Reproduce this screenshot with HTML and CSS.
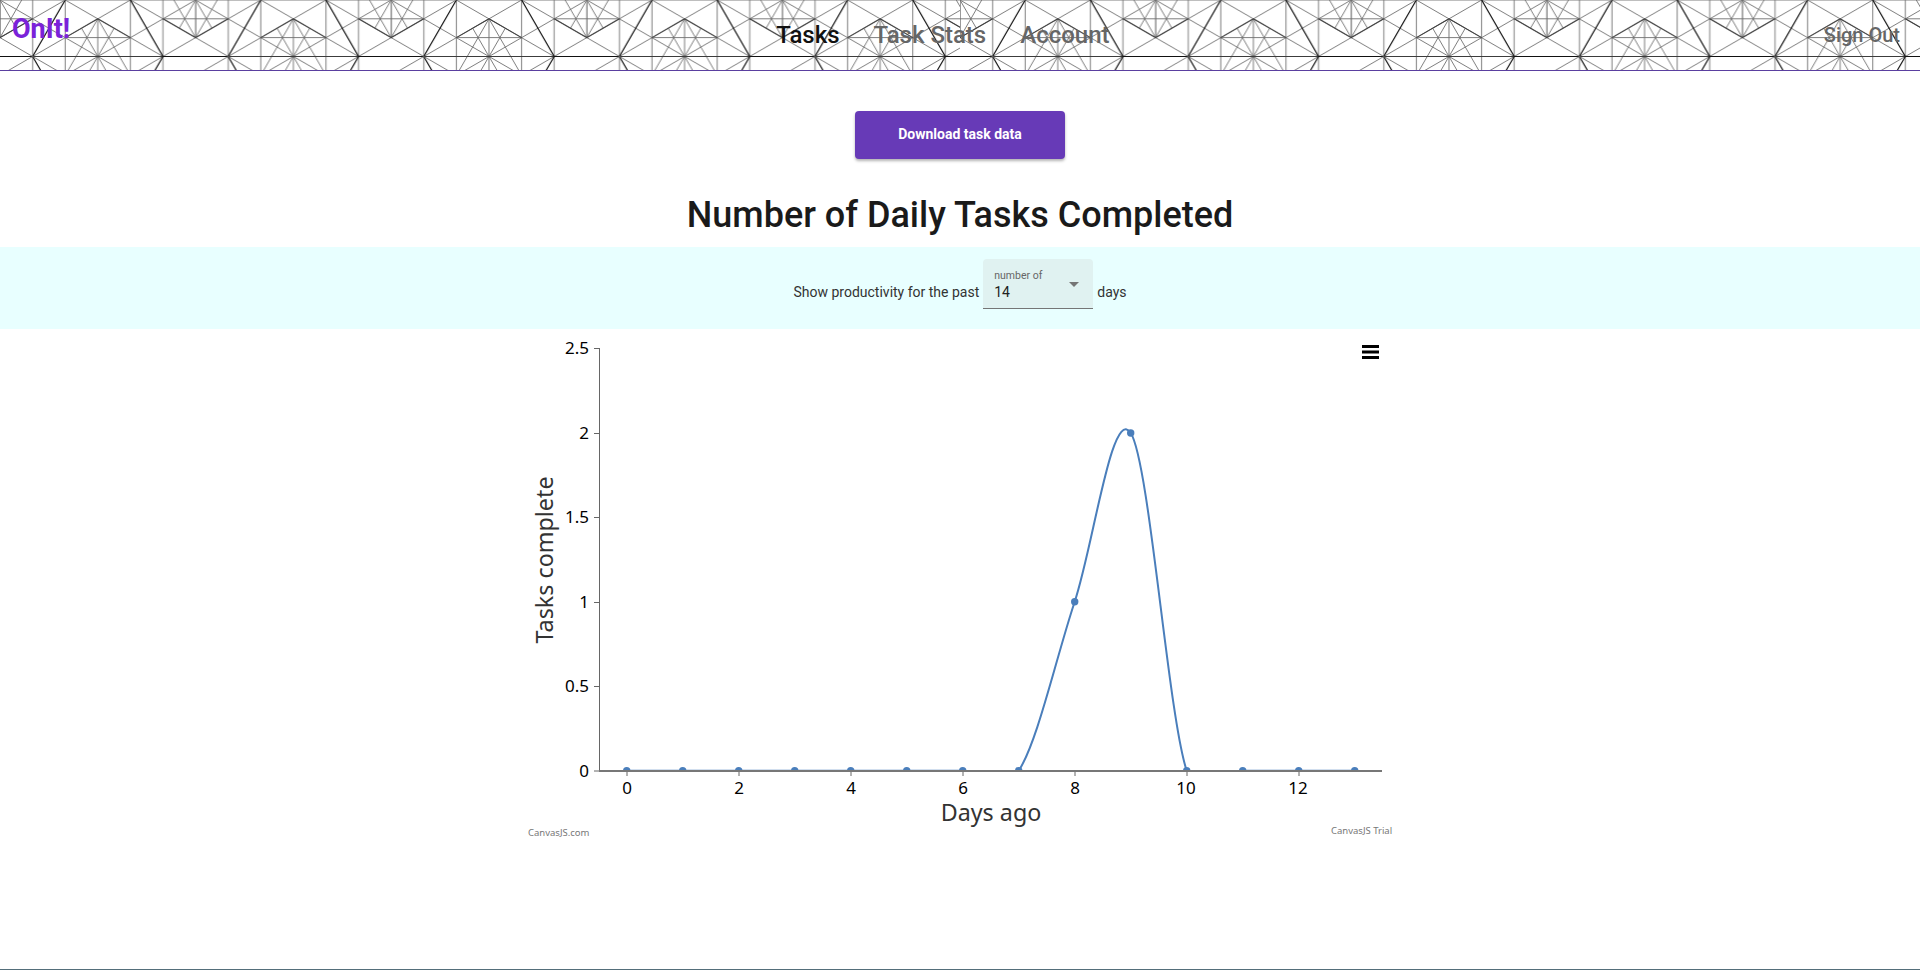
FILE: index.html
```html
<!DOCTYPE html>
<html lang="en">
<head>
    <meta charset="UTF-8">
    <title>OnIt! - Task Stats</title>
    <link rel="stylesheet" href="styles.css">
</head>
<body>

    <header class="nav">
        <div class="nav-bg">
            <svg class="nav-tile" width="960" height="70">
                <defs>
                    <g id="tile-lines">
                        <path class="ln-light" d="M163 0V76M32.6 0V76"/>
                        <path class="ln" d="M0 0H195.6M65.2 0V76M130.4 0V76M97.8 18.8V76M0 0V37.6M195.6 0V37.6M65.2 37.6H130.4M163 18.8H228.2"/>
                        <path class="ln" d="M32.6 56.5L130.4 0M65.2 0L163 56.5M81.5 28.2L97.8 56.5M114.100 28.2L97.8 56.5M195.6 0L97.8 56.5M0 0L97.8 56.5M97.8 56.5L65.2 75.3M97.8 56.5L130.4 75.3M97.8 56.5L86.9 75.3M97.8 56.5L108.7 75.3M97.8 18.8L65.2 75.3M97.8 18.8L130.4 75.3"/>
                        <path class="ln" d="M195.6 0L179.3 28.2M195.6 0L211.9 28.2M195.6 37.6L173.9 0M195.6 37.6L217.3 0M130.4 0L260.8 75.3M260.8 0L130.4 75.3M32.6 56.5L0 75.3"/>
                        <path class="ln-mid" d="M0 56.5H195.6M97.8 18.8L65.2 37.6M97.8 18.8L130.4 37.6M163 18.8L195.6 37.6L228.2 18.8"/>
                        <path class="ln-dark" d="M65.2 0L32.6 56.5L43.5 75.3M130.4 0L163 56.5L152.1 75.3M163 56.5H195.6M0 56.5H32.6"/>
                    </g>
                    <pattern id="tile" patternUnits="userSpaceOnUse" width="195.6" height="76">
                        <use href="#tile-lines"/>
                        <use href="#tile-lines" x="-195.6"/>
                    </pattern>
                </defs>
                <rect width="960" height="70" fill="url(#tile)"/>
            </svg>
            <svg class="nav-tile" width="960" height="70">
                <rect width="960" height="70" fill="url(#tile)"/>
            </svg>
        </div>
        <a class="brand" href="#">OnIt!</a>
        <nav class="nav-links">
            <a class="active" href="#">Tasks</a>
            <a href="#">Task Stats</a>
            <a href="#">Account</a>
        </nav>
        <a class="sign-out" href="#">Sign Out</a>
    </header>

    <main class="stats">
        <button class="download-btn">Download task data</button>
        <h1>Number of Daily Tasks Completed</h1>

        <div class="range-bar">
            <span class="range-text">Show productivity for the past</span>
            <div class="range-select">
                <span class="range-label">number of</span>
                <span class="range-value">14</span>
                <svg class="range-arrow" width="10" height="5" viewBox="0 0 10 5"><path d="M0 0H10L5 5Z"/></svg>
            </div>
            <span class="range-text">days</span>
        </div>

        <svg class="chart" width="880" height="530" viewBox="520 329 880 530">
            <defs>
                <clipPath id="plot"><rect x="600" y="340" width="782" height="431"/></clipPath>
            </defs>

            <!-- data -->
            <g clip-path="url(#plot)">
                <path class="series" d="M626.7 770.7H962.7C981 770.7 1000 799 1018.7 770.7C1037.4 742.5 1056 657.9 1074.7 601.7C1093.4 545.5 1112 404.8 1130.7 433C1149.4 461.2 1168 714.4 1186.7 770.7C1205.4 827 1224 770.7 1242.7 770.7H1354.7"/>
                <g class="dots">
                    <circle cx="626.7" cy="770.7" r="3.7"/>
                    <circle cx="682.7" cy="770.7" r="3.7"/>
                    <circle cx="738.7" cy="770.7" r="3.7"/>
                    <circle cx="794.7" cy="770.7" r="3.7"/>
                    <circle cx="850.7" cy="770.7" r="3.7"/>
                    <circle cx="906.7" cy="770.7" r="3.7"/>
                    <circle cx="962.7" cy="770.7" r="3.7"/>
                    <circle cx="1018.7" cy="770.7" r="3.7"/>
                    <circle cx="1074.7" cy="601.7" r="3.7"/>
                    <circle cx="1130.7" cy="433" r="3.7"/>
                    <circle cx="1186.7" cy="770.7" r="3.7"/>
                    <circle cx="1242.7" cy="770.7" r="3.7"/>
                    <circle cx="1298.7" cy="770.7" r="3.7"/>
                    <circle cx="1354.7" cy="770.7" r="3.7"/>
                </g>
            </g>

            <!-- axes -->
            <path class="axis" d="M599.5 348V771M594 348.5H599M594 433.5H599M594 517.5H599M594 602.5H599M594 686.5H599M594 771H599"/>
            <path class="axis" d="M627 771V776M739 771V776M851 771V776M963 771V776M1075 771V776M1187 771V776M1299 771V776"/>
            <path class="axis-x" d="M599 771H1382"/>

            <g class="tick tick-y">
                <text x="589" y="354">2.5</text>
                <text x="589" y="439">2</text>
                <text x="589" y="523">1.5</text>
                <text x="589" y="608">1</text>
                <text x="589" y="692">0.5</text>
                <text x="589" y="777">0</text>
            </g>
            <g class="tick tick-x">
                <text x="627" y="794">0</text>
                <text x="739" y="794">2</text>
                <text x="851" y="794">4</text>
                <text x="963" y="794">6</text>
                <text x="1075" y="794">8</text>
                <text x="1186" y="794">10</text>
                <text x="1298" y="794">12</text>
            </g>

            <text class="axis-title" x="991" y="821">Days ago</text>
            <text class="axis-title" transform="translate(553 560) rotate(-90)">Tasks complete</text>

            <!-- chart menu -->
            <path class="chart-menu" d="M1362 346.5H1379M1362 352H1379M1362 357.500H1379"/>

            <text class="credit" x="528" y="836">CanvasJS.com</text>
            <text class="credit" x="1331" y="834">CanvasJS Trial</text>
        </svg>
    </main>

    <footer class="page-foot"></footer>

</body>
</html>
```

FILE: styles.css
```css
html, body {
    height: 100%;
}

body {
    margin: 0;
    font-family: Roboto, "Liberation Sans", sans-serif;
    background-color: #ffffff;
    color: #212121;
    display: flex;
    flex-direction: column;
    overflow: hidden;
}

/* top nav */
.nav {
    position: relative;
    flex: none;
    height: 70px;
    border-bottom: 1px solid #5a3fa0;
    display: flex;
    align-items: center;
    justify-content: space-between;
    padding: 0 20px 0 12px;
    overflow: hidden;
}

.nav a {
    position: relative;
    text-decoration: none;
    font-weight: 500;
    color: #666;
}

.nav-bg {
    position: absolute;
    top: 0;
    left: 0;
    display: flex;
}

.nav-tile {
    display: block;
    flex: none;
}

.ln, .ln-light, .ln-mid, .ln-dark {
    fill: none;
}

.ln {
    stroke: #6e6e6e;
    stroke-width: 0.9;
}

.ln-light {
    stroke: #aaa;
    stroke-width: 1.5;
}

.ln-mid {
    stroke: #3c3c3c;
    stroke-width: 1;
}

.ln-dark {
    stroke: #111;
    stroke-width: 1.2;
}

.nav .brand {
    font-size: 27px;
    font-weight: 700;
    color: #7b22d9;
    margin-bottom: 12px;
}

.nav-links {
    position: relative;
    display: flex;
    gap: 34px;
    margin-right: 8px;
}

.nav-links a {
    font-size: 24px;
}

.nav-links a.active {
    color: #111;
}

.nav .sign-out {
    font-size: 20px;
}

/* stats page */
.stats {
    flex: 1;
    display: flex;
    flex-direction: column;
    align-items: center;
    min-height: 0;
}

.download-btn {
    margin-top: 40px;
    width: 210px;
    height: 48px;
    padding: 0 0 2px;
    border: none;
    border-radius: 4px;
    background-color: #673ab7;
    color: #fff;
    font-family: inherit;
    font-size: 14px;
    font-weight: 700;
    box-shadow: 0 2px 3px rgba(0, 0, 0, 0.3);
}

h1 {
    margin: 32px 0 0;
    font-size: 36px;
    line-height: 48px;
    font-weight: 500;
    color: #1a1a1a;
}

.range-bar {
    margin-top: 8px;
    align-self: stretch;
    height: 82px;
    box-sizing: border-box;
    padding-top: 12px;
    background-color: #e8ffff;
    display: flex;
    align-items: flex-start;
    justify-content: center;
    gap: 4px;
    font-size: 14px;
    color: #333;
}

.range-text {
    margin-top: 24px;
    line-height: 18px;
}

.range-select {
    position: relative;
    width: 110px;
    height: 50px;
    box-sizing: border-box;
    padding: 10px 11px 0;
    background-color: #e0f2f1;
    border-bottom: 1px solid #757575;
    border-radius: 4px 4px 0 0;
    display: flex;
    flex-direction: column;
}

.range-label {
    font-size: 10.500px;
    line-height: 13px;
    color: #666;
}

.range-value {
    margin-top: 1px;
    font-size: 14px;
    line-height: 18px;
    color: #222;
}

.range-arrow {
    position: absolute;
    top: 23px;
    right: 14px;
    fill: #757575;
}

/* chart */
.chart {
    display: block;
    flex: none;
}

.axis {
    fill: none;
    stroke: #666;
    stroke-width: 1;
}

.axis-x {
    fill: none;
    stroke: #777;
    stroke-width: 2;
}

.tick text {
    font-family: "Noto Sans", sans-serif;
    font-size: 17px;
    fill: #000;
}

.tick-y text {
    text-anchor: end;
}

.tick-x text {
    text-anchor: middle;
}

.axis-title {
    font-family: "Noto Sans", sans-serif;
    font-size: 23.300px;
    fill: #333;
    text-anchor: middle;
}

.series {
    fill: none;
    stroke: #4a7ebb;
    stroke-width: 2;
}

.dots circle {
    fill: #4a7ebb;
}

.chart-menu {
    fill: none;
    stroke: #000;
    stroke-width: 3;
}

.credit {
    font-family: "Noto Sans", sans-serif;
    font-size: 9.500px;
    fill: #777;
}

.page-foot {
    flex: none;
    height: 1px;
    background-color: #546e7a;
}
```
